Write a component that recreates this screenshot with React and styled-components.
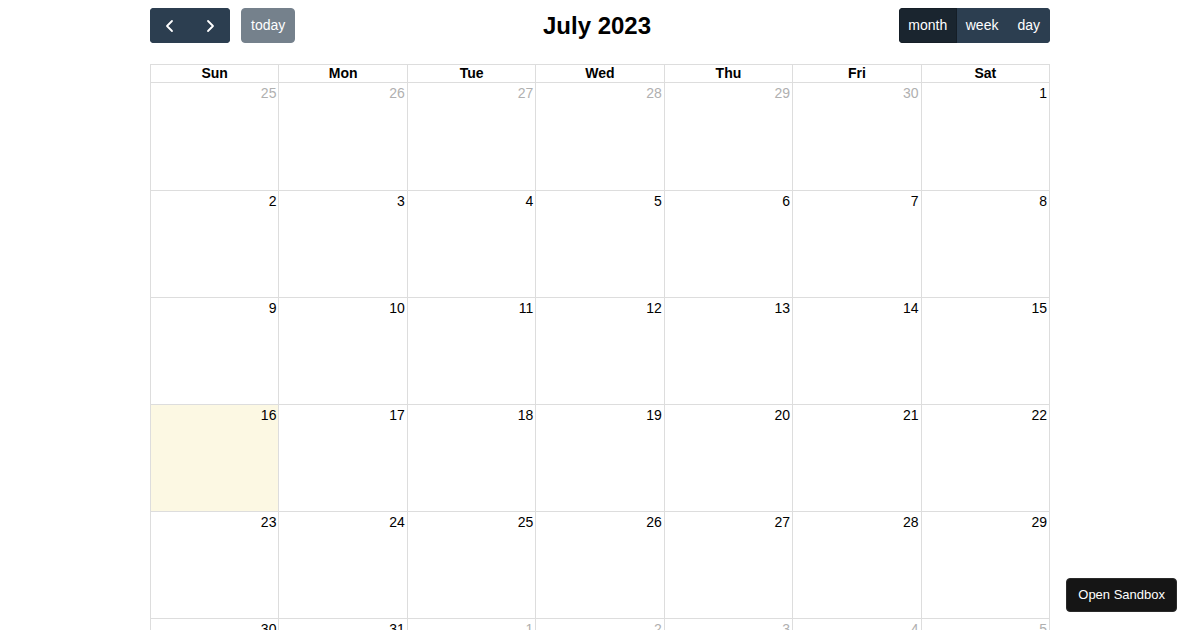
import React from "react";
import styled, { createGlobalStyle } from "styled-components";

const Global = createGlobalStyle`
  html, body { margin: 0; padding: 0; background: #fff; }
  body { font-family: "Liberation Sans", Arial, sans-serif; color: #000; overflow: hidden; }
`;

const Page = styled.div`
  width: 900px;
  margin: 0 auto;
  padding-top: 8px;
`;

const Toolbar = styled.div`
  display: flex;
  align-items: center;
  justify-content: space-between;
  height: 35px;
  margin-bottom: 21px;
`;

const Chunk = styled.div`
  display: flex;
  align-items: center;
  gap: 11px;
`;

const Group = styled.div`
  display: flex;
  border-radius: 4px;
  overflow: hidden;
`;

const Button = styled.button`
  height: 35px;
  box-sizing: border-box;
  padding: 0 ${(p) => p.$px || 9}px;
  font-family: "Liberation Sans", Arial, sans-serif;
  font-size: 14px;
  line-height: 21px;
  color: #fff;
  background: ${(p) => (p.$active ? "#1a252f" : "#2c3e50")};
  border: 1px solid ${(p) => (p.$active ? "#151e27" : "#2c3e50")};
  border-radius: ${(p) => (p.$solo ? "4px" : "0")};
  opacity: ${(p) => (p.$disabled ? 0.65 : 1)};
  display: flex;
  align-items: center;
  justify-content: center;
  cursor: pointer;
`;

const Title = styled.h2`
  margin: 0;
  font-size: 24px;
  font-weight: bold;
  line-height: 35px;
`;

const Table = styled.div`
  border-left: 1px solid #ddd;
  border-top: 1px solid #ddd;
`;

const Row = styled.div`
  display: grid;
  grid-template-columns: repeat(7, 1fr);
`;

const HeadCell = styled.div`
  border-right: 1px solid #ddd;
  border-bottom: 1px solid #ddd;
  text-align: center;
  font-size: 14px;
  font-weight: bold;
  line-height: 17px;
`;

const DayCell = styled.div`
  box-sizing: border-box;
  height: ${(p) => p.$h}px;
  border-right: 1px solid #ddd;
  border-bottom: 1px solid #ddd;
  background: ${(p) => (p.$today ? "#fcf8e3" : "#fff")};
  padding: 1px 2px 0 0;
  text-align: right;
`;

const DayNum = styled.span`
  font-size: 14px;
  line-height: 17px;
  color: ${(p) => (p.$other ? "#b0b0b0" : "#000")};
`;

const Sandbox = styled.button`
  position: fixed;
  right: 23px;
  bottom: 18px;
  height: 34px;
  padding: 0 11px;
  background: #151515;
  color: #fff;
  border: 1px solid #2a2a2a;
  border-radius: 4px;
  font-family: "Liberation Sans", Arial, sans-serif;
  font-size: 13px;
  line-height: 30px;
`;

const Chevron = ({ dir }) => (
  <svg width="12" height="14" viewBox="0 0 12 14" fill="none">
    <path
      d={dir === "left" ? "M8 2 L3 7 L8 12" : "M4 2 L9 7 L4 12"}
      stroke="#fff"
      strokeWidth="1.8"
      strokeLinecap="round"
      strokeLinejoin="round"
    />
  </svg>
);

const days = ["Sun", "Mon", "Tue", "Wed", "Thu", "Fri", "Sat"];

const weeks = [
  [[25, 1], [26, 1], [27, 1], [28, 1], [29, 1], [30, 1], [1, 0]],
  [2, 3, 4, 5, 6, 7, 8].map((d) => [d, 0]),
  [9, 10, 11, 12, 13, 14, 15].map((d) => [d, 0]),
  [16, 17, 18, 19, 20, 21, 22].map((d) => [d, 0]),
  [23, 24, 25, 26, 27, 28, 29].map((d) => [d, 0]),
  [[30, 0], [31, 0], [1, 1], [2, 1], [3, 1], [4, 1], [5, 1]],
];

export default function App() {
  return (
    <>
      <Global />
      <Page>
        <Toolbar>
          <Chunk>
            <Group>
              <Button $px={13} aria-label="prev">
                <Chevron dir="left" />
              </Button>
              <Button $px={13} aria-label="next">
                <Chevron dir="right" />
              </Button>
            </Group>
            <Button $solo $disabled $px={9}>today</Button>
          </Chunk>
          <Title>July 2023</Title>
          <Group>
            <Button $active $px={8.5}>month</Button>
            <Button $px={8}>week</Button>
            <Button $px={9}>day</Button>
          </Group>
        </Toolbar>
        <Table>
          <Row>
            {days.map((d) => (
              <HeadCell key={d}>{d}</HeadCell>
            ))}
          </Row>
          {weeks.map((w, i) => (
            <Row key={i}>
              {w.map(([d, other], j) => (
                <DayCell
                  key={j}
                  $h={i === 0 ? 108 : 107}
                  $today={i === 3 && j === 0}
                >
                  <DayNum $other={other}>{d}</DayNum>
                </DayCell>
              ))}
            </Row>
          ))}
        </Table>
      </Page>
      <Sandbox>Open Sandbox</Sandbox>
    </>
  );
}
